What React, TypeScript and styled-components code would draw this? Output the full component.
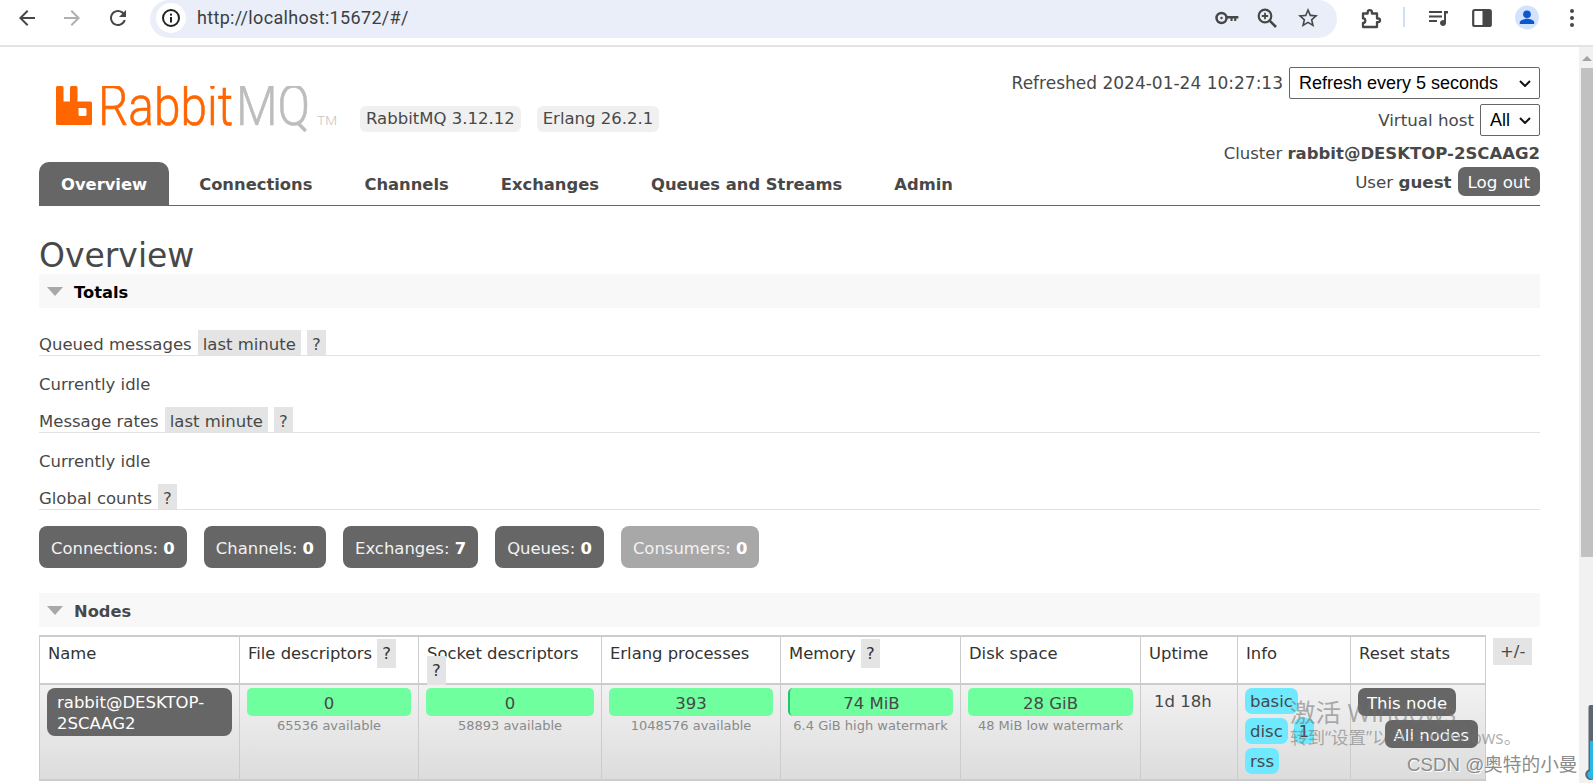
import React from "react";
import styled, { createGlobalStyle } from "styled-components";

const Global = createGlobalStyle`
  html, body { margin: 0; padding: 0; height: 783px; overflow: hidden; background: #fff; }
  #root { height: 783px; }
  * { box-sizing: border-box; }
`;

const Shell = styled.div`
  position: relative;
  width: 1593px;
  height: 783px;
  overflow: hidden;
  display: flex;
  flex-direction: column;
  font-family: "DejaVu Sans", Verdana, sans-serif;
  font-size: 16.5px;
  color: #484848;
`;

const Toolbar = styled.div`
  flex: none;
  height: 47px;
  display: flex;
  align-items: flex-start;
  padding-left: 15px;
  padding-right: 9px;
  border-bottom: 2px solid #e4e4e4;
  background: #fff;
`;
const ToolIcon = styled.div<{ $ml?: number }>`
  flex: none;
  width: 24px;
  height: 35px;
  margin-left: ${(p) => p.$ml ?? 0}px;
  display: flex;
  align-items: center;
  justify-content: center;
  & > svg { display: block; }
`;
const Address = styled.div`
  flex: 1;
  height: 38px;
  margin-left: 20px;
  border-radius: 19px;
  background: #e9eef8;
  display: flex;
  align-items: center;
  padding: 0 17px 3px 6px;
`;
const InfoBubble = styled.div`
  width: 30px;
  height: 30px;
  border-radius: 50%;
  background: #fff;
  display: flex;
  align-items: center;
  justify-content: center;
`;
const Url = styled.div`
  margin-left: 11px;
  font-family: Roboto, "Open Sans", sans-serif;
  font-size: 18px;
  letter-spacing: 0.33px;
  color: #3c4043;
  flex: 1;
`;
const Separator = styled.div`
  flex: none;
  width: 2px;
  height: 20px;
  margin: 7px 0 0 21px;
  background: #cfe0f7;
`;

const PageArea = styled.div`
  flex: 1;
  min-height: 0;
  display: flex;
`;
const Content = styled.main`
  flex: 1;
  min-width: 0;
  padding: 0 39px 0 39px;
`;
const Scrollbar = styled.div`
  flex: none;
  width: 14px;
  background: #f1f1f1;
  padding: 9px 0 0 2px;
`;
const ScrollArrow = styled.div`
  width: 0;
  height: 0;
  margin-left: 1px;
  border-left: 5px solid transparent;
  border-right: 5px solid transparent;
  border-bottom: 5px solid #a3a3a3;
`;
const ScrollThumb = styled.div`
  margin-top: 7px;
  height: 489px;
  background: #c1c1c1;
`;

const Header = styled.header`
  display: flex;
  justify-content: space-between;
  height: 159px;
  border-bottom: 1px solid #666;
`;
const HeaderLeft = styled.div`
  display: flex;
  flex-direction: column;
  justify-content: space-between;
  padding-top: 39px;
`;
const LogoRow = styled.div`
  display: flex;
  align-items: flex-start;
`;
const Logo = styled.svg`
  display: block;
  margin-left: 17px;
`;
const VersionBadge = styled.span<{ $ml: number }>`
  margin: 20px 0 0 ${(p) => p.$ml}px;
  height: 26px;
  line-height: 26px;
  padding: 0 6px;
  background: #f0f0f0;
  border-radius: 6px;
  white-space: nowrap;
`;
const Tabs = styled.nav`
  display: flex;
  gap: 8px;
`;
const Tab = styled.a<{ $active?: boolean }>`
  height: 43px;
  line-height: 45px;
  padding: 0 22px;
  border-radius: 10px 10px 0 0;
  font-weight: 700;
  font-size: 16.35px;
  color: ${(p) => (p.$active ? "#fff" : "#484848")};
  background: ${(p) => (p.$active ? "#666" : "transparent")};
`;
const HeaderRight = styled.div`
  display: flex;
  flex-direction: column;
  align-items: flex-end;
  padding-top: 20px;
  font-size: 16.7px;
`;
const HeaderLine = styled.div<{ $h: number; $mt?: number }>`
  display: flex;
  align-items: center;
  gap: 6px;
  height: ${(p) => p.$h}px;
  margin-top: ${(p) => p.$mt ?? 0}px;
  white-space: pre;
`;
const RefreshedText = styled.span`
  font-size: 17px;
`;
const ClusterText = styled.span`
  font-size: 16.5px;
`;
const Select = styled.select<{ $w: number }>`
  appearance: none;
  width: ${(p) => p.$w}px;
  height: 32px;
  font-family: "Liberation Sans", Arial, sans-serif;
  font-size: 18px;
  color: #000;
  background-color: #fff;
  background-image: url("data:image/svg+xml,%3Csvg xmlns='http://www.w3.org/2000/svg' width='12' height='7' viewBox='0 0 12 7'%3E%3Cpath d='M1 1l5 5 5-5' fill='none' stroke='%23111' stroke-width='2'/%3E%3C/svg%3E");
  background-repeat: no-repeat;
  background-position: right 8px center;
  border: 1px solid #666;
  border-radius: 2px;
  padding: 0 0 0 9px;
`;
const LogOut = styled.span`
  height: 29px;
  line-height: 30px;
  padding: 0 10px;
  border-radius: 7px;
  background: #666;
  color: #fff;
`;

const Title = styled.h1`
  margin: 0;
  height: 68px;
  padding-top: 30px;
  font-size: 33px;
  line-height: 40px;
  font-weight: 400;
  color: #484848;
`;
const SectionBar = styled.div<{ $mt?: number; $dark?: boolean }>`
  height: 34px;
  margin-top: ${(p) => p.$mt ?? 0}px;
  background: #f8f8f8;
  display: flex;
  align-items: center;
  padding-left: 8px;
  font-weight: 700;
  font-size: 16.3px;
  color: ${(p) => (p.$dark ? "#000" : "#484848")};
`;
const SectionLabel = styled.span`
  padding-top: 2px;
`;
const Triangle = styled.span`
  width: 0;
  height: 0;
  margin-right: 11px;
  border-left: 8px solid transparent;
  border-right: 8px solid transparent;
  border-top: 9px solid #a8a8a8;
`;
const SubHead = styled.div<{ $mt: number }>`
  height: 26px;
  margin-top: ${(p) => p.$mt}px;
  border-bottom: 1px solid #e2e2e2;
  display: flex;
  align-items: stretch;
  gap: 6px;
  line-height: 29px;
`;
const GreyTag = styled.span`
  padding: 0 5px;
  background: #e4e4e4;
`;
const Idle = styled.div`
  height: 51px;
  display: flex;
  align-items: center;
  padding-top: 5px;
`;
const Counts = styled.div`
  display: flex;
  gap: 17px;
  margin-top: 16px;
`;
const CountButton = styled.div<{ $faded?: boolean }>`
  height: 42px;
  line-height: 45px;
  padding: 0 12px;
  border-radius: 8px;
  color: #f2f2f2;
  font-size: 16.45px;
  white-space: pre;
  background: ${(p) => (p.$faded ? "#a8a8a8" : "#666")};
  & b { color: #fff; }
`;

const TableRow = styled.div`
  display: flex;
  align-items: flex-start;
  margin-top: 8px;
`;
const NodesTable = styled.table`
  table-layout: fixed;
  width: 1446px;
  border-collapse: collapse;
  border-style: solid;
  border-color: #ccc;
  border-width: 2px 1px;
  flex: none;
`;
const HeadCell = styled.th`
  height: 48px;
  padding: 8px 7px 0 8px;
  font-weight: 400;
  font-size: 16.4px;
  text-align: left;
  vertical-align: top;
  line-height: 17px;
  border: 1px solid #ccc;
  border-bottom-width: 2px;
  color: #333;
  & > span { padding: 5px 5px; background: #e4e4e4; }
`;
const BodyRow = styled.tr`
  background: linear-gradient(#f2f2f2, #dcdcdc);
`;
const BodyCell = styled.td`
  height: 96px;
  padding: 3px 7px 0 7px;
  vertical-align: top;
  border: 1px solid #ccc;
`;
const NodeName = styled.div`
  background: #666;
  color: #fff;
  border-radius: 8px;
  padding: 4px 10px 3px;
  line-height: 21px;
  height: 48px;
`;
const Bar = styled.div<{ $sliver?: boolean }>`
  height: 28px;
  line-height: 31px;
  border-radius: 5px;
  background: #6fff9f;
  text-align: center;
  border-left: ${(p) => (p.$sliver ? "2px solid #25c36b" : "0")};
`;
const BarNote = styled.div`
  margin-top: 1px;
  font-size: 13px;
  line-height: 18px;
  text-align: center;
  color: #8a8a8a;
  white-space: nowrap;
`;
const Uptime = styled.div`
  line-height: 28px;
  padding-left: 6px;
  color: #484848;
`;
const InfoRows = styled.div`
  display: flex;
  flex-direction: column;
  gap: 4px;
  align-items: flex-start;
`;
const InfoRow = styled.div`
  display: flex;
  gap: 6px;
`;
const InfoTag = styled.span`
  height: 26px;
  line-height: 27px;
  padding: 0 5px;
  border-radius: 7px;
  background: #6fe9ff;
`;
const ResetStack = styled.div`
  display: flex;
  flex-direction: column;
  gap: 4px;
`;
const ResetButton = styled.span<{ $end?: boolean }>`
  align-self: ${(p) => (p.$end ? "flex-end" : "flex-start")};
  height: 28px;
  line-height: 31px;
  padding: 0 9px;
  border-radius: 7px;
  background: #666;
  color: #fff;
  white-space: nowrap;
`;
const PlusMinus = styled.span`
  flex: none;
  margin: 3px 0 0 7px;
  height: 27px;
  line-height: 27px;
  padding: 0 7px;
  background: #e4e4e4;
`;

const WatermarkBig = styled.div`
  position: absolute;
  left: 1290px;
  top: 697px;
  font-family: "Open Sans", "Noto Sans CJK SC", sans-serif;
  font-size: 25.5px;
  line-height: 30px;
  color: rgba(110, 110, 110, 0.55);
  white-space: nowrap;
`;
const WatermarkSmall = styled.div`
  position: absolute;
  left: 1290px;
  top: 727px;
  font-family: "Open Sans", "Noto Sans CJK SC", sans-serif;
  font-size: 17.5px;
  line-height: 20px;
  color: rgba(110, 110, 110, 0.55);
  white-space: nowrap;
`;
const Csdn = styled.div`
  position: absolute;
  left: 1407px;
  top: 753px;
  font-family: "Liberation Sans", "Noto Sans CJK SC", sans-serif;
  font-size: 18.7px;
  line-height: 24px;
  color: #8c8c8c;
  text-shadow: 1px 1px 0 #fff;
  white-space: nowrap;
`;
const Thermo = styled.svg`
  position: absolute;
  right: 0;
  top: 703px;
`;

const Ico = ({ d, fill = "#474747", size = 24 }: { d: string; fill?: string; size?: number }) => (
  <svg width={size} height={size} viewBox="0 0 24 24"><path d={d} fill={fill} /></svg>
);

const STAR =
  "M22 9.24l-7.19-.62L12 2 9.19 8.63 2 9.24l5.46 4.73L5.82 21 12 17.27 18.18 21l-1.63-7.03L22 9.24zM12 15.4l-3.76 2.27 1-4.28-3.32-2.88 4.38-.38L12 6.1l1.71 4.04 4.38.38-3.32 2.88 1 4.28L12 15.4z";

const Help = () => <GreyTag>?</GreyTag>;

export default function App() {
  return (
    <Shell>
      <Global />
      <Toolbar>
        <ToolIcon>
          <Ico d="M20 11H7.83l5.59-5.59L12 4l-8 8 8 8 1.41-1.41L7.83 13H20v-2z" />
        </ToolIcon>
        <ToolIcon $ml={21}>
          <Ico fill="#b0b0b0" d="M4 11h12.17l-5.59-5.59L12 4l8 8-8 8-1.41-1.41L16.17 13H4v-2z" />
        </ToolIcon>
        <ToolIcon $ml={22}>
          <Ico d="M17.65 6.35C16.2 4.9 14.21 4 12 4c-4.42 0-7.99 3.58-7.99 8s3.57 8 7.99 8c3.73 0 6.84-2.55 7.73-6h-2.08c-.82 2.33-3.04 4-5.65 4-3.31 0-6-2.69-6-6s2.69-6 6-6c1.66 0 3.14.69 4.22 1.78L13 11h7V4l-2.35 2.35z" />
        </ToolIcon>
        <Address>
          <InfoBubble>
            <svg width="20" height="20" viewBox="0 0 20 20">
              <circle cx="10" cy="10" r="8" fill="none" stroke="#222" strokeWidth="2" />
              <rect x="9" y="9" width="2" height="5.5" fill="#222" />
              <rect x="9" y="5.6" width="2" height="2" fill="#222" />
            </svg>
          </InfoBubble>
          <Url>http://localhost:15672/#/</Url>
          <ToolIcon>
            <svg width="24" height="24" viewBox="0 0 24 24">
              <circle cx="6.500" cy="12" r="5" fill="none" stroke="#474747" strokeWidth="2.5" />
              <circle cx="6.500" cy="12" r="1.2" fill="#474747" />
              <path d="M11 10h12.400v2.600h-2.100v2.400h-2.100v-2.400h-1.600v2.400h-2.100v-2.400H11z" fill="#474747" />
            </svg>
          </ToolIcon>
          <ToolIcon $ml={16}>
            <svg width="24" height="24" viewBox="0 0 24 24">
              <circle cx="10" cy="10" r="6.300" fill="none" stroke="#474747" strokeWidth="2.200" />
              <path d="M14.600 14.600L21 21" stroke="#474747" strokeWidth="2.600" />
              <path d="M10 6.800v6.400M6.800 10h6.400" stroke="#474747" strokeWidth="1.800" />
            </svg>
          </ToolIcon>
          <ToolIcon $ml={17}>
            <Ico d={STAR} />
          </ToolIcon>
        </Address>
        <ToolIcon $ml={21}>
          <svg width="24" height="24" viewBox="0 0 24 24">
            <path
              d="M5 7.500h4.700V6.300a2.100 2.100 0 0 1 4.200 0v1.200H19v5h1.200a1.800 1.800 0 0 1 0 3.600H19V21H5v-4a2.300 2.300 0 0 0 0-4.600z"
              fill="#fff"
              stroke="#474747"
              strokeWidth="2.300"
              strokeLinejoin="round"
            />
          </svg>
        </ToolIcon>
        <Separator />
        <ToolIcon $ml={21}>
          <svg width="24" height="24" viewBox="0 0 24 24">
            <path d="M3 5h13v2H3zM3 9.500h13v2H3zM3 14h8v2H3z" fill="#474747" />
            <path d="M18 5h4v2.400h-2V17a3 3 0 1 1-2-2.800z" fill="#474747" />
          </svg>
        </ToolIcon>
        <ToolIcon $ml={20}>
          <svg width="24" height="24" viewBox="0 0 24 24">
            <rect x="3.200" y="4" width="17.600" height="16" rx="1.500" fill="#fff" stroke="#474747" strokeWidth="2.200" />
            <rect x="12.500" y="4" width="8.300" height="16" fill="#474747" />
          </svg>
        </ToolIcon>
        <ToolIcon $ml={21}>
          <svg width="25" height="25" viewBox="0 0 25 25">
            <circle cx="12.500" cy="12.500" r="12.500" fill="#d3e3fd" />
            <circle cx="12.500" cy="9.200" r="4" fill="#0b57d0" />
            <path d="M5 19.200v-1.600c0-2.400 4.600-3.700 7.500-3.700s7.500 1.300 7.500 3.700v1.600z" fill="#0b57d0" />
          </svg>
        </ToolIcon>
        <ToolIcon $ml={21}>
          <svg width="24" height="24" viewBox="0 0 24 24">
            <circle cx="12" cy="5" r="2" fill="#474747" />
            <circle cx="12" cy="12" r="2" fill="#474747" />
            <circle cx="12" cy="19" r="2" fill="#474747" />
          </svg>
        </ToolIcon>
      </Toolbar>

      <PageArea>
        <Content>
          <Header>
            <HeaderLeft>
              <LogoRow>
                <Logo width="285" height="46" viewBox="0 0 285 46">
                  <path
                    d="M1.500 0h4.500a1.500 1.500 0 0 1 1.500 1.500V15.500h6.500V1.500A1.500 1.500 0 0 1 15.500 0h4.500a1.500 1.500 0 0 1 1.500 1.500V15.500h13a1.500 1.500 0 0 1 1.500 1.500v20.500a1.500 1.500 0 0 1-1.500 1.500H1.500A1.500 1.500 0 0 1 0 37.500V1.500A1.500 1.500 0 0 1 1.500 0zM22.500 22v6.500a1.500 1.500 0 0 0 1.500 1.500h5a1.500 1.500 0 0 0 1.500-1.500V23.500A1.500 1.500 0 0 0 29 22z"
                    fill="#ff6600"
                    fillRule="evenodd"
                  />
                  <text x="42" y="39" fontFamily="Roboto, sans-serif" fontWeight="300" fontSize="55" stroke="#ff6600" strokeWidth="0.6" textLength="135" lengthAdjust="spacingAndGlyphs" fill="#ff6600">Rabbit</text>
                  <text x="180" y="39" fontFamily="Roboto, sans-serif" fontWeight="300" fontSize="55" stroke="#bdbdbd" strokeWidth="0.6" textLength="74" lengthAdjust="spacingAndGlyphs" fill="#bdbdbd">MQ</text>
                  <text x="261" y="39" fontFamily="Roboto, sans-serif" fontWeight="300" fontSize="13" textLength="20" lengthAdjust="spacingAndGlyphs" fill="#c4c4c4">TM</text>
                </Logo>
                <VersionBadge $ml={19}>RabbitMQ 3.12.12</VersionBadge>
                <VersionBadge $ml={16}>Erlang 26.2.1</VersionBadge>
              </LogoRow>
              <Tabs>
                <Tab $active>Overview</Tab>
                <Tab>Connections</Tab>
                <Tab>Channels</Tab>
                <Tab>Exchanges</Tab>
                <Tab>Queues and Streams</Tab>
                <Tab>Admin</Tab>
              </Tabs>
            </HeaderLeft>
            <HeaderRight>
              <HeaderLine $h={32}>
                <RefreshedText>Refreshed 2024-01-24 10:27:13</RefreshedText>
                <Select $w={251} defaultValue="5">
                  <option value="5">Refresh every 5 seconds</option>
                </Select>
              </HeaderLine>
              <HeaderLine $h={32} $mt={5}>
                <span>Virtual host</span>
                <Select $w={60} defaultValue="all">
                  <option value="all">All</option>
                </Select>
              </HeaderLine>
              <HeaderLine $h={28} $mt={3}>
                <ClusterText>Cluster <b>rabbit@DESKTOP-2SCAAG2</b></ClusterText>
              </HeaderLine>
              <HeaderLine $h={29}>
                <span>User <b>guest</b></span>
                <LogOut>Log out</LogOut>
              </HeaderLine>
            </HeaderRight>
          </Header>

          <Title>Overview</Title>
          <SectionBar $dark>
            <Triangle />
            <SectionLabel>Totals</SectionLabel>
          </SectionBar>
          <SubHead $mt={22}>
            <span>Queued messages</span>
            <GreyTag>last minute</GreyTag>
            <Help />
          </SubHead>
          <Idle>Currently idle</Idle>
          <SubHead $mt={0}>
            <span>Message rates</span>
            <GreyTag>last minute</GreyTag>
            <Help />
          </SubHead>
          <Idle>Currently idle</Idle>
          <SubHead $mt={0}>
            <span>Global counts</span>
            <Help />
          </SubHead>
          <Counts>
            <CountButton>Connections: <b>0</b></CountButton>
            <CountButton>Channels: <b>0</b></CountButton>
            <CountButton>Exchanges: <b>7</b></CountButton>
            <CountButton>Queues: <b>0</b></CountButton>
            <CountButton $faded>Consumers: <b>0</b></CountButton>
          </Counts>
          <SectionBar $mt={25}>
            <Triangle />
            <SectionLabel>Nodes</SectionLabel>
          </SectionBar>
          <TableRow>
            <NodesTable>
              <colgroup>
                <col width="200" />
                <col width="179" />
                <col width="183" />
                <col width="179" />
                <col width="180" />
                <col width="180" />
                <col width="97" />
                <col width="113" />
                <col width="135" />
              </colgroup>
              <thead>
                <tr>
                  <HeadCell>Name</HeadCell>
                  <HeadCell>File descriptors <span>?</span></HeadCell>
                  <HeadCell>Socket descriptors <span>?</span></HeadCell>
                  <HeadCell>Erlang processes</HeadCell>
                  <HeadCell>Memory <span>?</span></HeadCell>
                  <HeadCell>Disk space</HeadCell>
                  <HeadCell>Uptime</HeadCell>
                  <HeadCell>Info</HeadCell>
                  <HeadCell>Reset stats</HeadCell>
                </tr>
              </thead>
              <tbody>
                <BodyRow>
                  <BodyCell><NodeName>rabbit@DESKTOP-2SCAAG2</NodeName></BodyCell>
                  <BodyCell><Bar>0</Bar><BarNote>65536 available</BarNote></BodyCell>
                  <BodyCell><Bar>0</Bar><BarNote>58893 available</BarNote></BodyCell>
                  <BodyCell><Bar>393</Bar><BarNote>1048576 available</BarNote></BodyCell>
                  <BodyCell><Bar $sliver>74 MiB</Bar><BarNote>6.4 GiB high watermark</BarNote></BodyCell>
                  <BodyCell><Bar>28 GiB</Bar><BarNote>48 MiB low watermark</BarNote></BodyCell>
                  <BodyCell><Uptime>1d 18h</Uptime></BodyCell>
                  <BodyCell>
                    <InfoRows>
                      <InfoRow><InfoTag>basic</InfoTag></InfoRow>
                      <InfoRow><InfoTag>disc</InfoTag><InfoTag>1</InfoTag></InfoRow>
                      <InfoRow><InfoTag>rss</InfoTag></InfoRow>
                    </InfoRows>
                  </BodyCell>
                  <BodyCell>
                    <ResetStack>
                      <ResetButton>This node</ResetButton>
                      <ResetButton $end>All nodes</ResetButton>
                    </ResetStack>
                  </BodyCell>
                </BodyRow>
              </tbody>
            </NodesTable>
            <PlusMinus>+/-</PlusMinus>
          </TableRow>
        </Content>
        <Scrollbar>
          <ScrollArrow />
          <ScrollThumb />
        </Scrollbar>
      </PageArea>

      <WatermarkBig>激活 Windows</WatermarkBig>
      <WatermarkSmall>转到“设置”以激活 Windows。</WatermarkSmall>
      <Csdn>CSDN @奥特的小曼</Csdn>
      <Thermo width="9" height="80" viewBox="0 0 9 80">
        <path d="M9 2H6.500a2 2 0 0 0-2 2v62.500a5 5 0 0 0 4.500 10z" fill="#5b6670" />
        <path d="M9 38H6v30a4 4 0 0 0 3 7.500z" fill="#29b6e8" />
      </Thermo>
    </Shell>
  );
}
